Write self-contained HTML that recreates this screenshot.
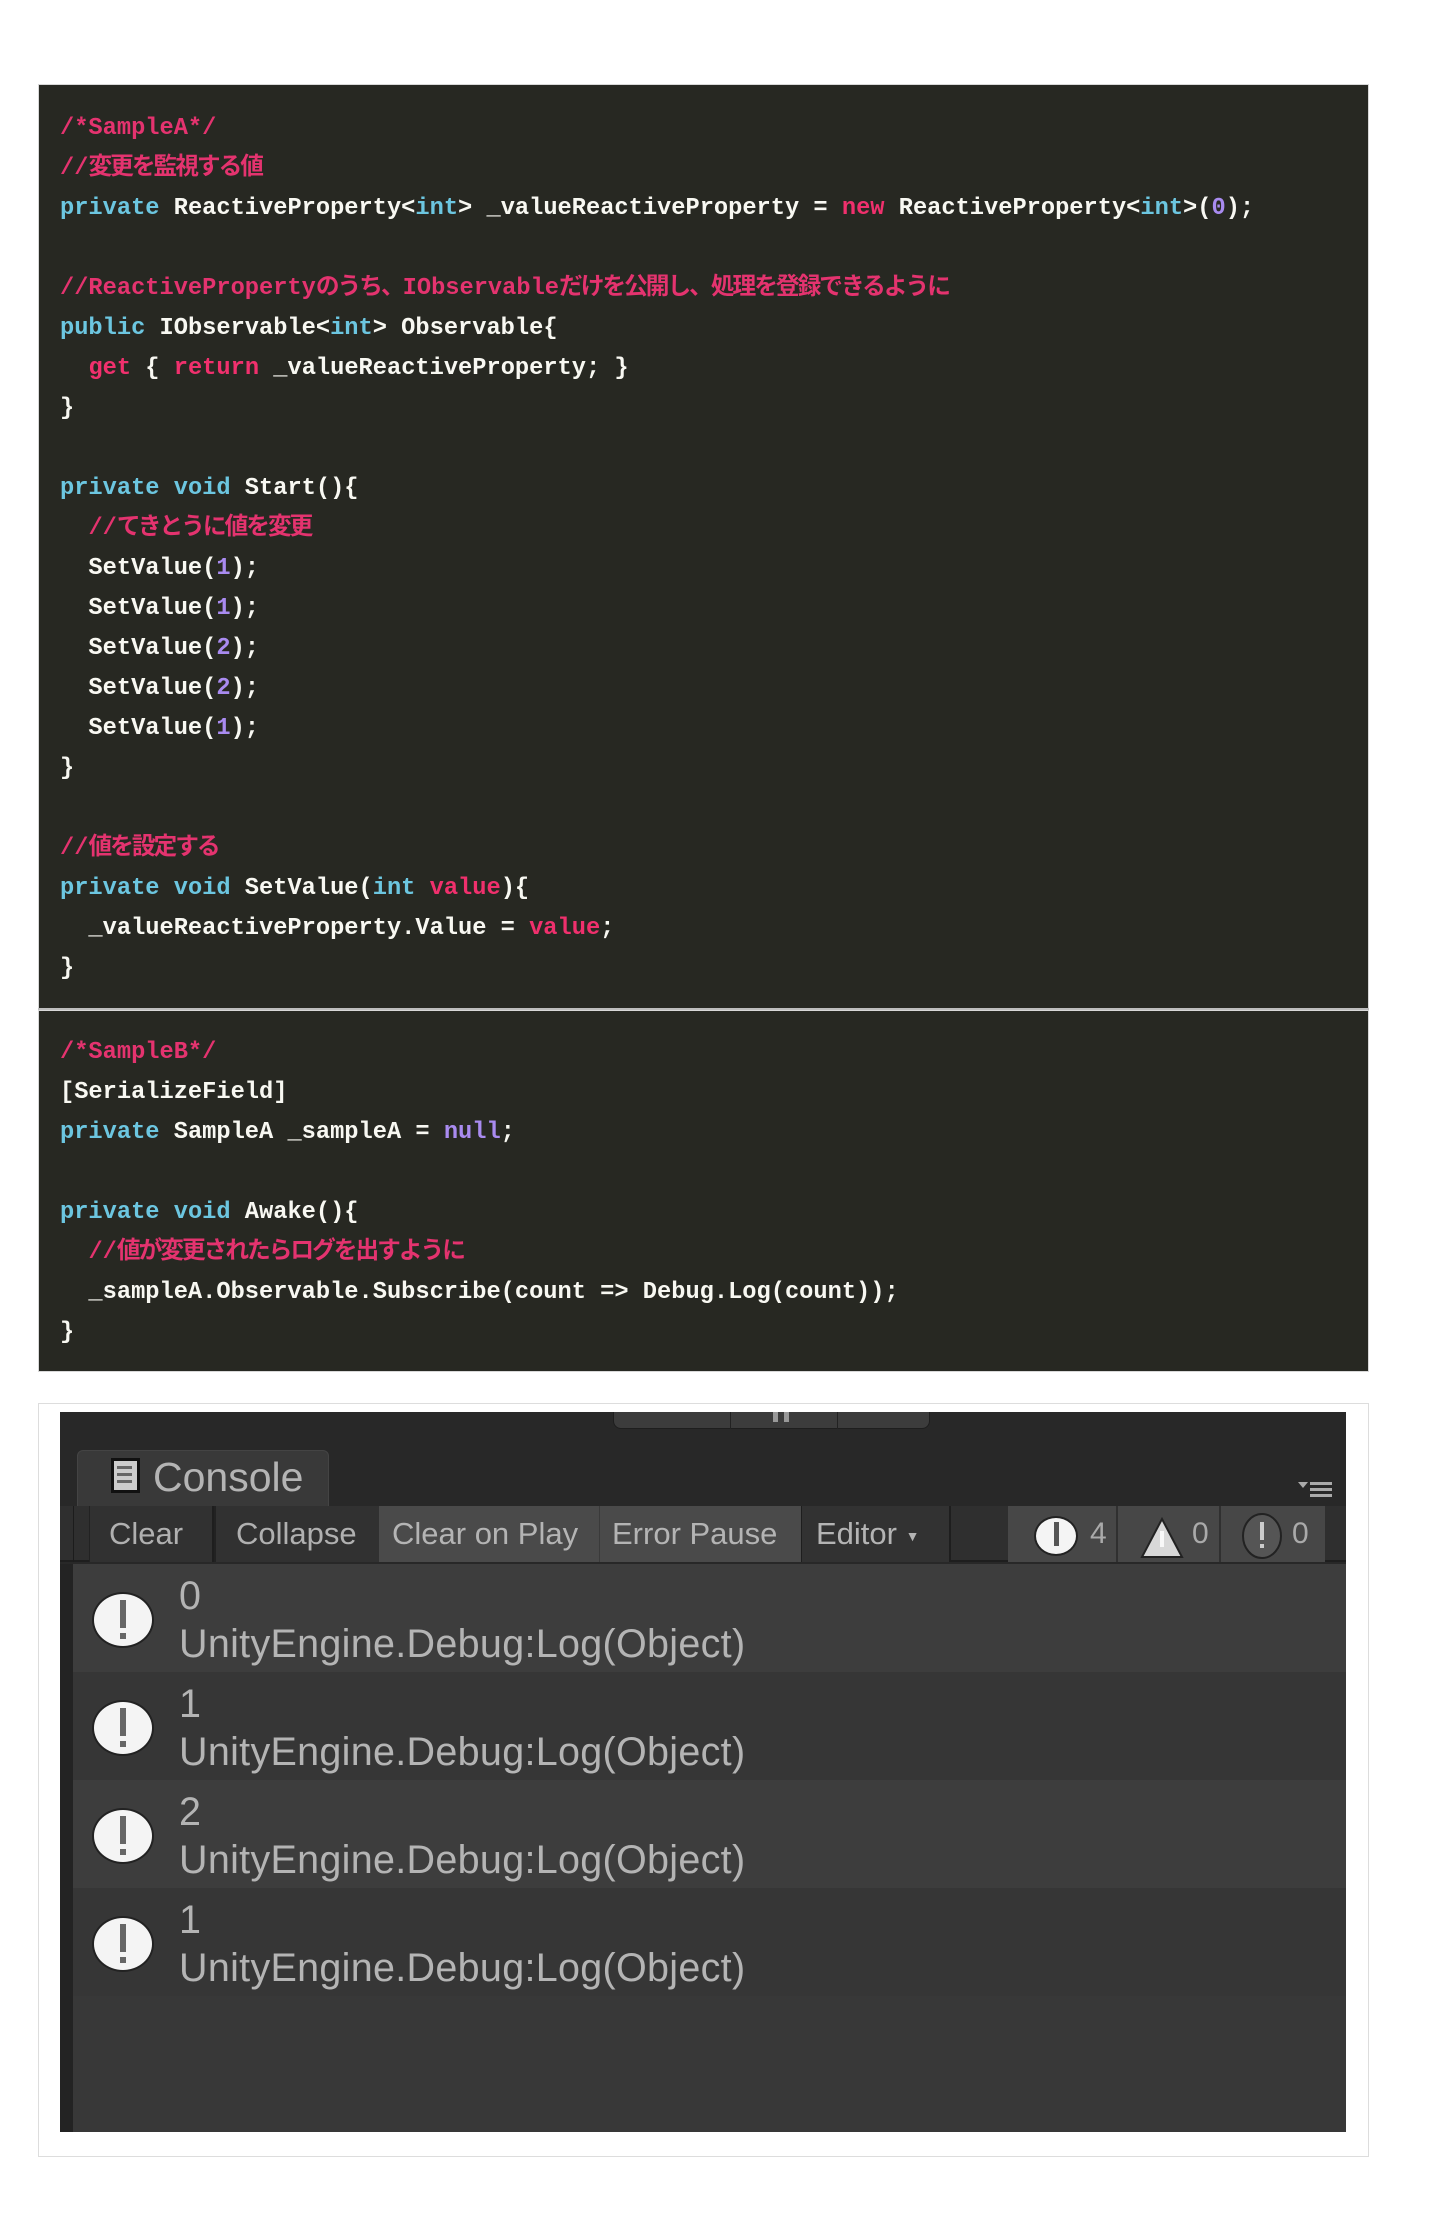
<!DOCTYPE html>
<html><head><meta charset="utf-8"><style>
*{margin:0;padding:0;box-sizing:border-box}
body{width:1440px;height:2240px;background:#fff;position:relative;overflow:hidden}
.code{position:absolute;left:38px;width:1331px;background:#272822;border:1px solid #d8d8d8;
font-family:"Liberation Mono","Noto Sans CJK JP",monospace;font-size:23.7px;line-height:40px;color:#f8f8f2;padding:0 0 0 21px;white-space:pre;font-weight:600}
.c{color:#e4336f}.k{color:#6cc6e0}.n{color:#a98bf0}.r{color:#f0306d}
.j{letter-spacing:-2px}
.a{position:absolute}
.con{font-family:"Liberation Sans","DejaVu Sans",sans-serif}
.rt{font-size:39.5px;line-height:48px;color:#b4b4b4;letter-spacing:0.3px}
</style></head><body>
<div class="code" style="top:84px;height:925px;padding-top:24px"><span class="c">/*SampleA*/</span>
<span class="c">//<span class="j">変更を監視する値</span></span>
<span class="k">private</span> ReactiveProperty&lt;<span class="k">int</span>&gt; _valueReactiveProperty = <span class="r">new</span> ReactiveProperty&lt;<span class="k">int</span>&gt;(<span class="n">0</span>);

<span class="c">//ReactiveProperty<span class="j">のうち、</span>IObservable<span class="j">だけを公開し、処理を登録できるように</span></span>
<span class="k">public</span> IObservable&lt;<span class="k">int</span>&gt; Observable{
  <span class="r">get</span> { <span class="r">return</span> _valueReactiveProperty; }
}

<span class="k">private</span> <span class="k">void</span> Start(){
  <span class="c">//<span class="j">てきとうに値を変更</span></span>
  SetValue(<span class="n">1</span>);
  SetValue(<span class="n">1</span>);
  SetValue(<span class="n">2</span>);
  SetValue(<span class="n">2</span>);
  SetValue(<span class="n">1</span>);
}

<span class="c">//<span class="j">値を設定する</span></span>
<span class="k">private</span> <span class="k">void</span> SetValue(<span class="k">int</span> <span class="r">value</span>){
  _valueReactiveProperty.Value = <span class="r">value</span>;
}</div>
<div class="a" style="left:38px;top:1008px;width:1331px;height:3px;background:#bdbdbd"></div>
<div class="code" style="top:1010px;height:362px;padding-top:22px"><span class="c">/*SampleB*/</span>
[SerializeField]
<span class="k">private</span> SampleA _sampleA = <span class="n">null</span>;

<span class="k">private</span> <span class="k">void</span> Awake(){
  <span class="c">//<span class="j">値が変更されたらログを出すように</span></span>
  _sampleA.Observable.Subscribe(count =&gt; Debug.Log(count));
}</div>

<div class="a" style="left:38px;top:1403px;width:1331px;height:754px;border:1px solid #ddd;background:#fff"></div>
<div class="a con" style="left:60px;top:1412px;width:1286px;height:720px;background:#282828;overflow:hidden">
  <div class="a" style="left:553px;top:-10px;width:317px;height:27px;background:#3c3c3c;border-radius:0 0 8px 8px;border:1px solid #1e1e1e"></div>
  <div class="a" style="left:670px;top:-10px;width:1px;height:27px;background:#222"></div>
  <div class="a" style="left:777px;top:-10px;width:1px;height:27px;background:#222"></div>
  <div class="a" style="left:713px;top:0;width:5px;height:10px;background:#999"></div>
  <div class="a" style="left:724px;top:0;width:5px;height:10px;background:#999"></div>
  <div class="a" style="left:17px;top:38px;width:252px;height:60px;background:#393939;border-radius:6px 6px 0 0;border:1px solid #444"></div>
  <div class="a" style="left:51px;top:46px;width:29px;height:35px;background:#ccc;border:3px solid #111"></div>
  <div class="a" style="left:57px;top:54px;width:15px;height:3px;background:#666;box-shadow:0 7px 0 #666,0 14px 0 #666"></div>
  <div class="a" style="left:93px;top:42px;font-size:41px;color:#b4b4b4">Console</div>
  <div class="a" style="left:1250px;top:70px;width:22px;height:3px;background:#aaa;box-shadow:0 6px 0 #aaa,0 12px 0 #aaa"></div>
  <div class="a" style="left:1238px;top:70px;border:5px solid transparent;border-top:6px solid #aaa"></div>
  <div class="a" style="left:0;top:94px;width:1286px;height:56px;background:#2f2f2f;border-bottom:2px solid #1e1e1e"></div>
  <div class="a" style="left:13px;top:94px;width:1px;height:56px;background:#1c1c1c"></div>
  <div class="a" style="left:29px;top:94px;width:125px;height:56px;border-right:2px solid #1e1e1e;color:#b0b0b0;font-size:31px;line-height:56px;padding-left:19px;background:#313131;border-left:1px solid #222">Clear</div>
  <div class="a" style="left:154px;top:94px;width:165px;height:56px;color:#b0b0b0;font-size:31px;line-height:56px;padding-left:20px;background:#313131;border-left:2px solid #222">Collapse</div>
  <div class="a" style="left:319px;top:94px;width:221px;height:56px;color:#b4b4b4;font-size:31px;line-height:56px;padding-left:13px;background:#4a4a4a;border-right:1px solid #3a3a3a">Clear on Play</div>
  <div class="a" style="left:540px;top:94px;width:201px;height:56px;color:#b4b4b4;font-size:31px;line-height:56px;padding-left:12px;background:#4a4a4a">Error Pause</div>
  <div class="a" style="left:741px;top:94px;width:150px;height:56px;color:#b4b4b4;font-size:31px;line-height:56px;padding-left:14px;background:#323232;border-left:1px solid #1e1e1e;border-right:2px solid #1e1e1e">Editor <span style="font-size:14px;vertical-align:middle">▼</span></div>
  <div class="a" style="left:948px;top:94px;width:317px;height:56px;background:#474747"></div>
  <div class="a" style="left:1056px;top:94px;width:2px;height:56px;background:#303030"></div>
  <div class="a" style="left:1159px;top:94px;width:2px;height:56px;background:#303030"></div>
  <div class="a" style="left:974px;top:104px;width:44px;height:40px;border-radius:50%;background:#f4f4f4;border:2px solid #222"></div>
  <div class="a" style="left:994px;top:110px;width:5px;height:24px;background:#555"></div>
  <div class="a" style="left:1030px;top:94px;font-size:30px;line-height:56px;color:#aaa">4</div>
  <svg class="a" style="left:1080px;top:105px" width="44" height="42"><polygon points="22,2 42,40 2,40" fill="#d8d8d8" stroke="#222" stroke-width="2"/><rect x="20" y="14" width="4" height="16" fill="#f8f8f8"/></svg>
  <div class="a" style="left:1132px;top:94px;font-size:30px;line-height:56px;color:#aaa">0</div>
  <svg class="a" style="left:1180px;top:100px" width="44" height="48"><ellipse cx="22" cy="24" rx="19" ry="22" fill="#555" stroke="#222" stroke-width="2"/><rect x="20" y="10" width="4" height="18" fill="#ccc"/><rect x="20" y="32" width="4" height="4" fill="#ccc"/></svg>
  <div class="a" style="left:1232px;top:94px;font-size:30px;line-height:56px;color:#aaa">0</div>
  <div class="a" style="left:0;top:152px;width:13px;height:568px;background:#232323"></div>
  <div class="a" style="left:13px;top:152px;width:1273px;height:108px;background:#3d3d3d"></div>
  <div class="a" style="left:13px;top:260px;width:1273px;height:108px;background:#363636"></div>
  <div class="a" style="left:13px;top:368px;width:1273px;height:108px;background:#3d3d3d"></div>
  <div class="a" style="left:13px;top:476px;width:1273px;height:108px;background:#363636"></div>
  <div class="a" style="left:13px;top:584px;width:1273px;height:136px;background:#383838"></div>
</div>
<div class="a con" style="left:0;top:0">
  <div class="a" style="left:92px;top:1592px;width:62px;height:56px;border-radius:50%;background:#f4f4f4;border:2px solid #222"></div>
  <div class="a" style="left:120px;top:1600px;width:6px;height:28px;background:#666"></div>
  <div class="a" style="left:120px;top:1633px;width:6px;height:6px;background:#666"></div>
  <div class="a rt" style="left:179px;top:1572px">0<br>UnityEngine.Debug:Log(Object)</div>

  <div class="a" style="left:92px;top:1700px;width:62px;height:56px;border-radius:50%;background:#f4f4f4;border:2px solid #222"></div>
  <div class="a" style="left:120px;top:1708px;width:6px;height:28px;background:#666"></div>
  <div class="a" style="left:120px;top:1741px;width:6px;height:6px;background:#666"></div>
  <div class="a rt" style="left:179px;top:1680px">1<br>UnityEngine.Debug:Log(Object)</div>

  <div class="a" style="left:92px;top:1808px;width:62px;height:56px;border-radius:50%;background:#f4f4f4;border:2px solid #222"></div>
  <div class="a" style="left:120px;top:1816px;width:6px;height:28px;background:#666"></div>
  <div class="a" style="left:120px;top:1849px;width:6px;height:6px;background:#666"></div>
  <div class="a rt" style="left:179px;top:1788px">2<br>UnityEngine.Debug:Log(Object)</div>

  <div class="a" style="left:92px;top:1916px;width:62px;height:56px;border-radius:50%;background:#f4f4f4;border:2px solid #222"></div>
  <div class="a" style="left:120px;top:1924px;width:6px;height:28px;background:#666"></div>
  <div class="a" style="left:120px;top:1957px;width:6px;height:6px;background:#666"></div>
  <div class="a rt" style="left:179px;top:1896px">1<br>UnityEngine.Debug:Log(Object)</div>
</div>
</body></html>
